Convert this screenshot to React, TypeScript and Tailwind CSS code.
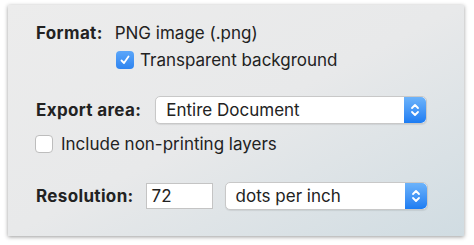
import React from "react";

const Stepper = () => (
  <div className="flex h-full w-[22px] items-center justify-center rounded-r-[5px] bg-gradient-to-b from-[#6cb3fa] to-[#1b7cf2]">
    <svg width="10" height="16" viewBox="0 0 10 16" fill="none" stroke="white" strokeWidth="1.8" strokeLinecap="round" strokeLinejoin="round">
      <path d="M2 6 L5 3 L8 6" />
      <path d="M2 10 L5 13 L8 10" />
    </svg>
  </div>
);

const Select = ({ text, w }: { text: string; w: string }) => (
  <div className={`flex h-[28px] items-stretch rounded-[5px] border border-[#c8c8c8] bg-white shadow-[0_1px_1px_rgba(0,0,0,0.08)] ${w}`}>
    <div className="flex flex-1 items-center pl-[10px]">{text}</div>
    <Stepper />
  </div>
);

export default function App() {
  return (
    <div className="h-[245px] w-[474px] bg-white pl-[8px] pt-[5px]" style={{ fontFamily: "Inter, 'Noto Sans', sans-serif" }}>
      <div className="flex h-[231px] w-[456px] flex-col bg-gradient-to-br from-[#ececec] via-[#e8e9ea] to-[#d0dce2] pl-[28px] pt-[18px] text-[17px] leading-[20px] text-[#222] shadow-[0_1px_4px_rgba(0,0,0,0.4)]">
        <div className="flex items-center gap-[12px]">
          <span className="font-bold tracking-[0.35px]">Format:</span>
          <span>PNG image (.png)</span>
        </div>
        <div className="mt-[7px] ml-[80px] flex items-center gap-[6px]">
          <div className="flex h-[18px] w-[18px] items-center justify-center rounded-[4px] bg-gradient-to-b from-[#5ba6fa] to-[#2e84f0]">
            <svg width="12" height="12" viewBox="0 0 12 12" fill="none" stroke="white" strokeWidth="1.8" strokeLinecap="round" strokeLinejoin="round">
              <path d="M2.5 6.5 L5 9 L9.5 2.5" />
            </svg>
          </div>
          <span>Transparent background</span>
        </div>
        <div className="mt-[26px] flex items-center gap-[14px]">
          <span className="font-bold tracking-[0.35px]">Export area:</span>
          <Select text="Entire Document" w="w-[272px]" />
        </div>
        <div className="mt-[10px] ml-[-1px] flex items-center gap-[8px]">
          <div className="h-[18px] w-[18px] rounded-[4px] border border-[#bdbdbd] bg-white" />
          <span>Include non-printing layers</span>
        </div>
        <div className="mt-[28px] flex items-center">
          <span className="font-bold tracking-[0.35px]">Resolution:</span>
          <div className="ml-[12px] flex h-[26px] w-[67px] items-center border border-[#c4c4c4] bg-white pl-[5px]">72</div>
          <div className="ml-[12px]">
            <Select text="dots per inch" w="w-[203px]" />
          </div>
        </div>
      </div>
    </div>
  );
}
